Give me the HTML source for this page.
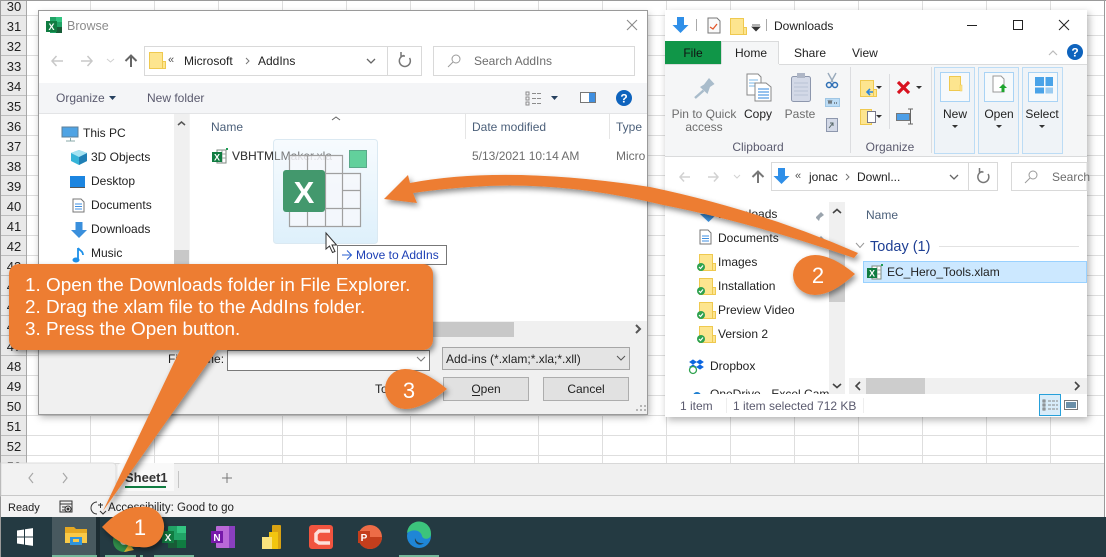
<!DOCTYPE html>
<html><head><meta charset="utf-8"><title>Install add-in</title>
<style>
html,body{margin:0;padding:0;background:#fff;width:1106px;height:557px;overflow:hidden}
svg{display:block}
text{font-family:"Liberation Sans",sans-serif;font-size:12px;fill:#222}
.g{fill:#6d6d6d}.n{fill:#4c607a}.b{fill:#5a5a6e}
.c{text-anchor:middle}
.ca{font-size:18.900px;fill:#fff}
.st{font-size:22px;fill:#fff;text-anchor:middle}
.r{font-size:13px;text-anchor:middle}
</style></head><body>
<svg width="1106" height="557" viewBox="0 0 1106 557" xmlns="http://www.w3.org/2000/svg">
<defs>
<pattern id="grid" x="26" y="15" width="64" height="20" patternUnits="userSpaceOnUse">
<path d="M.5 0V20M0 .5H64" stroke="#dedede" fill="none"/></pattern>
<filter id="sh" x="-5%" y="-5%" width="112%" height="112%"><feDropShadow dx="2" dy="3" stdDeviation="4" flood-color="#000" flood-opacity=".3"/></filter>
<filter id="sh2" x="-20%" y="-20%" width="140%" height="150%"><feDropShadow dx="2" dy="3" stdDeviation="3" flood-color="#000" flood-opacity=".45"/></filter>
<linearGradient id="dr" x1="0" y1="0" x2="0" y2="1"><stop offset="0" stop-color="#f7fbfe"/><stop offset="1" stop-color="#def0fb"/></linearGradient>
<g id="fold"><rect x="0" y="0" width="13" height="16" fill="#fde58f" stroke="#efc94f"/><rect x="13" y="9" width="3" height="7" fill="#fde58f" stroke="#efc94f"/></g>
<g id="syncf"><use href="#fold"/><circle cx="1.500" cy="12.500" r="4" fill="#2fa24f"/><path d="M-.5 12.500l1.500 1.500L3.500 11" stroke="#fff" fill="none" stroke-width="1.200"/></g>
<g id="xl"><rect x="5" y="1" width="9" height="13" fill="#fff" stroke="#7d8a80"/><path d="M9 5H14M9 9H14M10 1V14" stroke="#9aa39c" fill="none"/><rect x="0" y="3" width="10" height="10" fill="#107c41"/><text x="5" y="11.500" class="c" style="font-size:9px;font-weight:bold;fill:#fff">X</text><rect x="14" y="-1" width="2" height="2" fill="#1f9d55"/></g>
</defs>

<!-- Excel background -->
<rect width="1106" height="557" fill="#fff"/>
<rect x="26" y="1" width="1078" height="462" fill="url(#grid)"/>
<rect x="1" y="1" width="25" height="462" fill="#e9e9e9"/>
<path d="M1 15.500H26M1 35.500H26M1 55.500H26M1 75.500H26M1 95.500H26M1 115.500H26M1 135.500H26M1 155.500H26M1 175.500H26M1 195.500H26M1 215.500H26M1 235.500H26M1 255.500H26M1 275.500H26M1 295.500H26M1 315.500H26M1 335.500H26M1 355.500H26M1 375.500H26M1 395.500H26M1 415.500H26M1 435.500H26M1 455.500H26" stroke="#bdbdbd"/>
<path d="M26.500 1V463" stroke="#a8a8a8"/>
<path d="M0 .5H1106M.5 0V557M1104.500 0V517" stroke="#9a9a9a"/>
<text x="14" y="11" class="r">30</text><text x="14" y="31" class="r">31</text><text x="14" y="51" class="r">32</text><text x="14" y="71" class="r">33</text><text x="14" y="91" class="r">34</text><text x="14" y="111" class="r">35</text><text x="14" y="131" class="r">36</text><text x="14" y="151" class="r">37</text><text x="14" y="171" class="r">38</text><text x="14" y="191" class="r">39</text><text x="14" y="211" class="r">40</text><text x="14" y="231" class="r">41</text><text x="14" y="251" class="r">42</text><text x="14" y="271" class="r">43</text><text x="14" y="291" class="r">44</text><text x="14" y="311" class="r">45</text><text x="14" y="331" class="r">46</text><text x="14" y="351" class="r">47</text><text x="14" y="371" class="r">48</text><text x="14" y="391" class="r">49</text><text x="14" y="411" class="r">50</text><text x="14" y="431" class="r">51</text><text x="14" y="451" class="r">52</text><text x="14" y="471" class="r">53</text>
<!-- sheet tabs -->
<rect x="1" y="463" width="1103" height="33" fill="#f0f0f0"/>
<path d="M1 463.500H1104" stroke="#d8d8d8"/>
<path d="M1 463H112q4 0 4 4V496H1z" fill="#f2f2f2" stroke="#dcdcdc"/>
<path d="M118 496V467q0-4 4-4H174V491q0 0-4 0H122q-4 0-4 5z" fill="#f9f9f9"/>
<path d="M33 473l-4 5 4 5M63 473l4 5-4 5" stroke="#a8a8a8" fill="none" stroke-width="1.200"/>
<path d="M178.500 471V488" stroke="#c4c4c4"/>
<path d="M222 478H232M227 473V483" stroke="#777" fill="none"/>
<text x="125" y="482" style="font-size:13px;font-weight:bold;fill:#333">Sheet1</text>
<rect x="125" y="486" width="41" height="2" fill="#107c41"/>
<!-- status bar -->
<rect x="1" y="496" width="1103" height="21" fill="#f3f3f3"/>
<path d="M1 495.500H1104" stroke="#c8c8c8"/>
<text x="8" y="511" style="font-size:11px">Ready</text>
<g fill="none" stroke="#333"><rect x="60" y="501" width="12" height="11"/><path d="M60 504H72M62 507H66M62 510H65"/><circle cx="68" cy="509" r="3" fill="#f3f3f3"/><circle cx="68" cy="509" r="1" fill="#333"/>
<path d="M97 502a6 6 0 1 0 0 12" /><path d="M98 505h5M100.500 503v5M100 511l3 3 3-3"/></g>
<text x="108" y="511" style="font-size:11.500px">Accessibility: Good to go</text>
<!-- taskbar -->
<rect x="1" y="517" width="1105" height="40" fill="#243a42"/>
<path d="M17 530.500l7-1v7h-7zM25 529.300l8-1.200v8.400h-8zM17 537.500h7v7l-7-1zM25 537.500h8v8.400l-8-1.200z" fill="#fff"/>
<rect x="52" y="517" width="45" height="40" fill="#48595f"/>
<rect x="96" y="517" width="4" height="40" fill="#1c2c32"/>
<rect x="52" y="555" width="45" height="2" fill="#76b79a"/>
<rect x="105" y="555" width="31" height="2" fill="#76b79a"/><rect x="140" y="555" width="3" height="2" fill="#76b79a"/><rect x="154" y="555" width="40" height="2" fill="#76b79a"/><rect x="399" y="555" width="40" height="2" fill="#76b79a"/>
<!-- explorer taskbar icon -->
<path d="M65 529h22v14H65z" fill="#f9c947"/><path d="M65 527h9l2 2h11v4H65z" fill="#e5a822"/><rect x="70" y="537" width="12" height="8" fill="#2f94dd"/><rect x="73" y="539" width="6" height="3" fill="#f9c947"/>
<circle cx="124" cy="541" r="11" fill="#2f8d49"/><circle cx="124" cy="541" r="4" fill="#c9d9c9"/><path d="M124 552l5-8 5 6z" fill="#e0b030"/>
<!-- Excel -->
<rect x="168" y="526" width="18" height="22" rx="1" fill="#21a366"/><rect x="177" y="526" width="9" height="7" fill="#33c481"/><rect x="177" y="540" width="9" height="8" fill="#107c41"/><rect x="168" y="540" width="9" height="8" fill="#185c37"/>
<rect x="162" y="531" width="12" height="12" fill="#107c41"/><text x="168" y="541" class="c" style="font-size:10px;font-weight:bold;fill:#fff">X</text>
<!-- OneNote -->
<rect x="216" y="526" width="19" height="22" rx="1" fill="#ba68d8"/><rect x="229" y="526" width="6" height="22" fill="#8a3fbf"/><rect x="211" y="531" width="12" height="12" fill="#7719aa"/><text x="217" y="541" class="c" style="font-size:10px;font-weight:bold;fill:#fff">N</text>
<!-- Power BI -->
<rect x="272" y="525" width="9" height="24" rx="1" fill="#d9a212"/><rect x="269" y="532" width="9" height="17" fill="#f2c50f"/><rect x="262" y="537" width="10" height="12" fill="#f9e27d"/>
<!-- Camtasia -->
<rect x="309" y="525" width="24" height="24" rx="3" fill="#f1543f"/><path d="M330 531h-11l-3 3v7l3 2h11" fill="none" stroke="#fde0da" stroke-width="3.500"/>
<!-- PPT -->
<circle cx="370" cy="537" r="12" fill="#ed6c47"/><path d="M370 537h12a12 12 0 0 1-24 0z" fill="#c43e1c"/><rect x="358" y="531" width="12" height="12" fill="#c43e1c"/><text x="364" y="541" class="c" style="font-size:10px;font-weight:bold;fill:#fff">P</text>
<!-- Edge -->
<circle cx="419" cy="536" r="12" fill="#1f86d6"/><path d="M407 533a12 12 0 0 1 24 1c0 6-8 6-9 2-1-5-8-8-15-3z" fill="#3cc47c"/><path d="M415 538c1 4 5 6 9 5-5 4-10 0-9-5z" fill="#243a42"/>

<!-- BROWSE DIALOG -->
<g filter="url(#sh)"><rect x="38" y="11" width="609" height="403" fill="#fff"/></g>
<rect x="38.500" y="10.500" width="609" height="404" fill="#fff" stroke="#9a9a9a"/>
<rect x="39" y="321" width="608" height="93" fill="#f0f0f0"/>
<rect x="50" y="17" width="12" height="16" fill="#21a366"/><rect x="56" y="17" width="6" height="5" fill="#33c481"/><rect x="56" y="27" width="6" height="6" fill="#185c37"/><rect x="46" y="21" width="11" height="11" fill="#107c41"/><text x="51.500" y="30" class="c" style="font-size:9px;font-weight:bold;fill:#fff">X</text>
<text x="67" y="30" style="fill:#8c8c8c;font-size:12.500px">Browse</text>
<path d="M627 20l10 10M637 20l-10 10" stroke="#8a8a8a" fill="none" stroke-width="1.100"/>
<!-- nav -->
<path d="M63 61H52M56.500 56l-4.500 5 4.500 5M81 61H92M87.500 56l4.500 5-4.500 5" stroke="#c8c8c8" fill="none" stroke-width="1.500"/>
<path d="M107 59l3.500 3 3.500-3" stroke="#cfcfcf" fill="none"/>
<path d="M131 67V56M125.500 61l5.500-5.500 5.500 5.500" stroke="#666" fill="none" stroke-width="2"/>
<rect x="144.500" y="46.500" width="277" height="29" fill="#fff" stroke="#d9d9d9"/>
<path d="M387.500 47V75" stroke="#d9d9d9"/>
<use href="#fold" x="149.500" y="52.500"/>
<text x="168" y="63" style="font-size:11px;fill:#555">«</text>
<text x="184" y="65">Microsoft</text><path d="M246 58l3 3-3 3" stroke="#777" fill="none"/><text x="258" y="65">AddIns</text>
<path d="M367 59l4 4 4-4" stroke="#666" fill="none" stroke-width="1.300"/>
<path d="M409.500 58a5.500 5.500 0 1 1-5.500-2.500M401 52v4h4" stroke="#777" fill="none" stroke-width="1.500"/>
<rect x="433.500" y="46.500" width="201" height="29" fill="#fff" stroke="#d9d9d9"/>
<circle cx="456" cy="59" r="4" fill="none" stroke="#9a9a9a"/><path d="M453 62l-5 5" stroke="#9a9a9a"/>
<text x="474" y="65" class="g">Search AddIns</text>
<!-- toolbar -->
<rect x="39" y="83" width="608" height="30" fill="#f4f5f7"/>
<path d="M39 113.500H647" stroke="#e3e4e6"/>
<text x="56" y="102" class="b">Organize</text><path d="M109 96h7l-3.500 4z" fill="#27415f"/>
<text x="147" y="102" class="b">New folder</text>
<path d="M526 92h3v3h-3zM526 97h3v3h-3zM526 102h3v3h-3z" fill="none" stroke="#8c8c8c"/><path d="M532 93.500H541M532 98.500H541M532 103.500H541" stroke="#8c8c8c" stroke-dasharray="4 1"/>
<path d="M551 96h7l-3.500 4z" fill="#27415f"/>
<rect x="580.500" y="92.500" width="15" height="10" fill="#fff" stroke="#777"/><rect x="589" y="93" width="6" height="9" fill="#3f8fe0"/>
<circle cx="624" cy="98" r="8" fill="#0e63bd"/><text x="624" y="102.500" class="c" style="font-size:12px;font-weight:bold;fill:#fff">?</text>
<!-- nav pane -->
<rect x="174" y="114" width="15" height="207" fill="#f0f0f0"/>
<path d="M178 125l3.500-3 3.500 3" stroke="#555" fill="none" stroke-width="1.500"/>
<rect x="174" y="250" width="15" height="15" fill="#c8c8c8"/>
<path d="M189.500 114V321" stroke="#f4f4f4"/>
<rect x="62" y="127" width="16" height="10" fill="#4fa3e4" stroke="#5d7f99"/><path d="M66 141H75M70.500 138v3" stroke="#8aa" /><text x="83" y="137">This PC</text>
<path d="M79 150l-8 3v8l8 4 8-4v-8z" fill="#36b4d8"/><path d="M79 157l8-4v8l-8 4z" fill="#1f7fb5"/><path d="M71 153l8 4 8-4-8-3z" fill="#a5e3f2"/><text x="91" y="161">3D Objects</text>
<rect x="70" y="176" width="15" height="11" fill="#1c85e0"/><rect x="70" y="187" width="15" height="1" fill="#555"/><text x="91" y="185">Desktop</text>
<path d="M73 199h8l3 3v10H73z" fill="#fff" stroke="#777"/><path d="M75 204h7M75 206.500h7M75 209h7" stroke="#3f8fe0"/><text x="91" y="209">Documents</text>
<path d="M75.500 222h7v8h4.500l-8 8-8-8h4.500z" fill="#3a8fdc"/><text x="91" y="233">Downloads</text>
<path d="M78 248v11M78 248c2 3 5 3 5 7" stroke="#1e90e8" fill="none" stroke-width="1.800"/><ellipse cx="76" cy="260" rx="3.500" ry="2.500" fill="#1e90e8"/><text x="91" y="257">Music</text>
<!-- list -->
<path d="M332 120l4-3 4 3" stroke="#666" fill="none"/>
<text x="211" y="131" class="n">Name</text>
<path d="M465.500 114V139M609.500 114V139" stroke="#e5e5e5"/>
<text x="472" y="131" class="n">Date modified</text><text x="616" y="131" class="n">Type</text>
<use href="#xl" x="212" y="149"/>
<text x="232" y="160">VBHTMLMaker.xla</text>
<text x="472" y="160" class="g">5/13/2021 10:14 AM</text>
<text x="616" y="160" class="g">Micro</text>
<!-- bottom -->
<rect x="190" y="322" width="324" height="15" fill="#c8c8c8"/>
<path d="M636 325l4 4-4 4" stroke="#555" fill="none" stroke-width="2"/>
<rect x="227.500" y="350.500" width="202" height="20" fill="#fff" stroke="#7a7a7a"/>
<path d="M417 357l4 4 4-4" stroke="#777" fill="none"/>
<text x="168" y="363">File name:</text>
<rect x="442.500" y="347.500" width="187" height="22" fill="#e4e4e4" stroke="#a6a6a6"/>
<text x="446" y="363">Add-ins (*.xlam;*.xla;*.xll)</text>
<path d="M617 356l4 4 4-4" stroke="#555" fill="none"/>
<text x="375" y="393">Tools</text>
<rect x="443.500" y="377.500" width="85" height="23" fill="#e1e1e1" stroke="#adadad"/>
<text x="486" y="393" class="c">Open</text><path d="M472 395.500h8" stroke="#222"/>
<rect x="543.500" y="377.500" width="85" height="23" fill="#e1e1e1" stroke="#adadad"/>
<text x="586" y="393" class="c">Cancel</text>
<path d="M644 405h2v2h-2zM640 409h2v2h-2zM644 409h2v2h-2zM636 409h2v2h-2zM640 405h2v2h-2z" fill="#b5b5b5"/>

<!-- drag image -->
<rect x="273.500" y="139.500" width="104" height="104" rx="3" fill="url(#dr)" stroke="#dbe9f2"/>
<text x="232" y="160" style="fill:#444;opacity:.7">VBHTMLMaker.xla</text>
<path d="M289.500 155.500H342.500V173.500H360.500V226.500H289.500zM289.500 208.500H360.500M342.500 190.500H360.500M342.500 173.500V226.500M307.500 155.500V226.500M325.500 155.500V226.500M289.500 173.500H342.500" fill="#f6f8fb" fill-opacity=".8" stroke="#a0a0a0" stroke-width="1.200"/>
<rect x="349.500" y="150.500" width="17" height="17" fill="#62d09c" stroke="#5aa98a"/>
<rect x="283" y="170" width="42" height="42" rx="3" fill="#43986d"/>
<text x="304" y="203" class="c" style="font-size:31px;font-weight:bold;fill:#fff">X</text>
<path d="M326 233v16l3.500-3 3 6.500 2.500-1-3-6.500h4.500z" fill="#fff" stroke="#333"/>
<rect x="337.500" y="245.500" width="109" height="19" fill="#fff" stroke="#777"/>
<path d="M342 255H351M347 250.500l4.500 4.500-4.500 4.500" stroke="#2a5fd0" fill="none"/>
<text x="356" y="259" style="fill:#1c3fb5">Move to AddIns</text>

<!-- EXPLORER -->
<g filter="url(#sh)"><rect x="665" y="10" width="422" height="407" fill="#fff"/></g>
<!-- title -->
<path d="M677.500 17h7v8h4.500l-8 8-8-8h4.500z" fill="#2f8fe8" transform="translate(-.5,0)"/>
<path d="M696.500 19V31" stroke="#aaa"/>
<path d="M708 18h9l3 3v12H708z" fill="#fafafa" stroke="#777"/><path d="M710 27l3 2 4-5" stroke="#e2562a" fill="none" stroke-width="1.300"/>
<use href="#fold" x="730.500" y="18.500"/>
<path d="M752 25h8M752 27h8l-4 4z" fill="#333" stroke="#333" stroke-width=".7"/>
<path d="M766.500 19V31" stroke="#aaa"/>
<text x="774" y="30">Downloads</text>
<path d="M967 25.500H977" stroke="#222"/><rect x="1013.500" y="20.500" width="9" height="9" fill="none" stroke="#222"/><path d="M1059 20l10 10M1069 20l-10 10" stroke="#222" fill="none"/>
<!-- tabs -->
<rect x="665" y="41" width="56" height="23" fill="#109648"/>
<text x="693" y="57" class="c" style="fill:#111">File</text>
<rect x="665" y="64" width="422" height="92" fill="#f5f6f7"/>
<path d="M665 64.500H721M779 64.500H1087" stroke="#dadbdc"/>
<path d="M721.500 64V41.500H778.500V64" fill="#fff" stroke="#dadbdc"/>
<rect x="722" y="42" width="56" height="23" fill="#f5f6f7"/>
<text x="735" y="57">Home</text><text x="794" y="57">Share</text><text x="852" y="57">View</text>
<path d="M1049 55l4-4 4 4" stroke="#bbb" fill="none" stroke-width="1.200"/>
<circle cx="1075" cy="52" r="8" fill="#0e63bd"/><text x="1075" y="56.500" class="c" style="font-size:12px;font-weight:bold;fill:#fff">?</text>
<!-- ribbon -->
<path d="M709 78L714.500 84L710 87L707.500 94L700 87L704 84.500z" fill="#a9bccb"/><path d="M703.500 90.500L695 98" stroke="#a9bccb" stroke-width="2.500"/>
<text x="704" y="118" class="c g">Pin to Quick</text><text x="704" y="131" class="c g">access</text>
<path d="M747 74h11l3 3v18h-14z" fill="#fff" stroke="#888"/><path d="M749 80h9M749 83h9M749 86h9" stroke="#7bb8ea"/>
<path d="M755 83h11l5 4v14h-16z" fill="#fff" stroke="#888"/><path d="M758 89h11M758 92h11M758 95h11M758 98h11" stroke="#2e86dc"/>
<text x="758" y="118" class="c">Copy</text>
<rect x="791.500" y="76.500" width="19" height="25" rx="2" fill="#d3d9e7" stroke="#8d97ad"/><rect x="797" y="73" width="8" height="5" fill="#aeb6c6"/><path d="M794 83h14M794 87h14M794 91h14M794 95h14" stroke="#b9c2d6"/>
<text x="800" y="118" class="c g">Paste</text>
<path d="M828 73l5 9M836 73l-5 9" stroke="#9ab" fill="none" stroke-width="1.400"/><circle cx="829" cy="85" r="2.500" fill="none" stroke="#2e6fb5" stroke-width="1.500"/><circle cx="835" cy="85" r="2.500" fill="none" stroke="#2e6fb5" stroke-width="1.500"/>
<rect x="825.500" y="98.500" width="14" height="8" fill="#bcdcf5" stroke="#9fc6e4"/><path d="M828 100l1 4 1-4 1 4 1-4" stroke="#555" fill="none" stroke-width=".7"/><path d="M834 103h3" stroke="#333" stroke-dasharray="1 1"/>
<rect x="826.500" y="118.500" width="11" height="13" fill="#d3d9e7" stroke="#8d97ad"/><path d="M829 128l4-5M830 123h3v3" stroke="#566" fill="none"/>
<text x="758" y="151" class="c b">Clipboard</text>
<path d="M850.500 67V153M931.500 67V153M889.500 74V129" stroke="#dcdde0"/>
<use href="#fold" x="860.500" y="80.500"/><path d="M873 92h-6M870 89l-3 3 3 3" stroke="#2e86dc" fill="none" stroke-width="1.600"/><path d="M876 86h6l-3 3z" fill="#333"/>
<rect x="860.500" y="109.500" width="11" height="15" fill="#fde58f" stroke="#efc94f"/><rect x="867.500" y="111.500" width="8" height="11" fill="#fff" stroke="#778"/><path d="M876 115h6l-3 3z" fill="#333"/>
<path d="M898 82l11 11M909 82l-11 11" stroke="#d8121f" stroke-width="3.200" fill="none"/><path d="M916 86h6l-3 3z" fill="#333"/>
<rect x="896.500" y="113.500" width="13" height="7" fill="#4d9fe8" stroke="#777"/><path d="M908 109h5M908 124h5M910.500 109v15" stroke="#666" fill="none"/>
<text x="890" y="151" class="c b">Organize</text>
<g fill="#eff3f7" stroke="#bcdcf5"><rect x="934.500" y="67.500" width="40" height="86"/><rect x="978.500" y="67.500" width="40" height="86"/><rect x="1022.500" y="67.500" width="40" height="86"/></g>
<g fill="#f6f9fb" stroke="#a9d3f5"><rect x="940.500" y="72.500" width="29" height="29"/><rect x="984.500" y="72.500" width="29" height="29"/><rect x="1028.500" y="72.500" width="29" height="29"/></g>
<rect x="949.500" y="76.500" width="11" height="14" fill="#fde58f" stroke="#efc94f"/><rect x="960" y="85" width="2" height="6" fill="#fde58f" stroke="#efc94f" stroke-width=".5"/>
<path d="M993 76h8l3 3v13h-11z" fill="#fff" stroke="#999"/><path d="M1003 84l-4 4h2.500v4h3v-4h2.500z" fill="#1ea52e"/>
<path d="M1035 77h9v9h-9zM1045.500 77h7.500v9h-7.500zM1035 87.500h9v6h-9zM1045.500 87.500h7.500v6h-7.500z" fill="#4aa3e8"/><path d="M1045.500 87.500h7.500v6h-7.500z" fill="#9bcbf0"/>
<text x="955" y="118" class="c">New</text><text x="999" y="118" class="c">Open</text><text x="1042" y="118" class="c">Select</text>
<path d="M952 125h6l-3 3zM996 125h6l-3 3zM1039 125h6l-3 3z" fill="#333"/>
<path d="M665 156.500H1087" stroke="#dadbdc"/>
<!-- address -->
<path d="M690 177H680M684 172.500L680 177l4 4.500M708 177h10M714 172.500l4 4.500-4 4.500" stroke="#d2d2d2" fill="none" stroke-width="1.500"/>
<path d="M734 175l3 3 3-3" stroke="#d2d2d2" fill="none"/>
<path d="M758 183V172M752.500 177l5.500-5.500 5.500 5.500" stroke="#777" fill="none" stroke-width="2"/>
<rect x="771.500" y="162.500" width="226" height="28" fill="#fff" stroke="#d9d9d9"/><path d="M968.500 163V190" stroke="#d9d9d9"/>
<path d="M778 168h7v8h4.500l-8 8-8-8h4.500z" fill="#2f8fe8"/>
<text x="795" y="179" style="font-size:11px;fill:#555">«</text>
<text x="809" y="181">jonac</text><path d="M846 174l3 3-3 3" stroke="#777" fill="none"/><text x="857" y="181">Downl...</text>
<path d="M950 175l4 4 4-4" stroke="#666" fill="none" stroke-width="1.300"/>
<path d="M988 174a5.500 5.500 0 1 1-5.500-2.500M979.500 168v4h4" stroke="#777" fill="none" stroke-width="1.500"/>
<rect x="1011.500" y="162.500" width="75.500" height="28" fill="#fff" stroke="#d9d9d9"/>
<circle cx="1033" cy="175" r="4" fill="none" stroke="#9a9a9a"/><path d="M1030 178l-5 5" stroke="#9a9a9a"/>
<text x="1052" y="181" class="g">Search</text>
<!-- nav pane -->
<path d="M705 208h7v6h5l-8.500 8-8.500-8h5z" fill="#3a8fdc"/><text x="718" y="218">Downloads</text>
<path d="M816 217l5-5 3 3-4 3-1 3-3-3z" fill="#9aa4ad"/>
<path d="M700 230h8l3 3v11h-11z" fill="#fff" stroke="#777"/><path d="M702 236h7M702 238.500h7M702 241h7" stroke="#3f8fe0"/><text x="718" y="242">Documents</text>
<path d="M816 241l5-5 3 3-4 3-1 3-3-3z" fill="#9aa4ad"/>
<use href="#syncf" x="699.500" y="254.500"/><text x="718" y="266">Images</text>
<use href="#syncf" x="699.500" y="278.500"/><text x="718" y="290">Installation</text>
<use href="#syncf" x="699.500" y="302.500"/><text x="718" y="314">Preview Video</text>
<use href="#syncf" x="699.500" y="326.500"/><text x="718" y="338">Version 2</text>
<path d="M693 360l3 2-3 2-3-2zM700 360l3 2-3 2-3-2zM693 365l3 2-3 2-3-2zM700 365l3 2-3 2-3-2z" fill="#0d66e0" stroke="#0d66e0"/><circle cx="693" cy="370" r="3.500" fill="#fff" stroke="#2fa24f" stroke-width="1.300"/>
<text x="710" y="370">Dropbox</text>
<circle cx="697" cy="396" r="4" fill="#1f7fd0"/><text x="710" y="398">OneDrive - Excel Cam</text>
<rect x="665" y="394" width="422" height="23" fill="#fff"/>
<rect x="829" y="202" width="16" height="192" fill="#f0f0f0"/>
<rect x="829" y="250" width="16" height="52" fill="#cdcdcd"/>
<path d="M833 213l4-3.500 4 3.500M833 384l4 3.500 4-3.500" stroke="#444" fill="none" stroke-width="1.600"/>
<text x="866" y="219" class="n">Name</text>
<path d="M856 243l4 4.500 4-4.500" stroke="#999" fill="none"/>
<text x="870" y="251" style="font-size:14.500px;fill:#1e3f94">Today (1)</text>
<path d="M939 246.500H1079" stroke="#e2e2e2"/>
<rect x="863.500" y="261.500" width="223" height="21" fill="#cce8ff" stroke="#99d1ff"/>
<use href="#xl" x="867" y="265"/>
<text x="887" y="276">EC_Hero_Tools.xlam</text>
<rect x="849" y="378" width="238" height="16" fill="#f0f0f0"/>
<rect x="866" y="378" width="59" height="16" fill="#cdcdcd"/>
<path d="M860 382l-4 4 4 4M1075 382l4 4-4 4" stroke="#444" fill="none" stroke-width="1.600"/>
<text x="680" y="410" class="b">1 item</text><path d="M726.500 398V413M863.500 398V413" stroke="#eee"/>
<text x="733" y="410" class="b">1 item selected  712 KB</text>
<rect x="1039.500" y="394.500" width="21" height="21" fill="#d8ecf9" stroke="#26a0da"/>
<path d="M1043 400h2v2h-2zM1043 404h2v2h-2zM1043 408h2v2h-2z" fill="none" stroke="#777"/><path d="M1048 401H1058M1048 405H1058M1048 409H1058" stroke="#888" stroke-dasharray="3 1"/>
<rect x="1064.500" y="400.500" width="13" height="9" fill="#fff" stroke="#777"/><rect x="1066" y="402" width="10" height="6" fill="#6b8fa8"/>

<!-- ORANGE ANNOTATIONS -->
<g filter="url(#sh2)">
<path d="M384 199L408 175L410 183Q505 165 650 187Q760 210 858 253L854 258Q750 222 663 205Q560 180 470 187Q440 189 413 193L417 203Z" fill="#ed7d31"/>
</g>
<g filter="url(#sh2)">
<path d="M19 264H423a10 10 0 0 1 10 10V340a10 10 0 0 1-10 10H217L103 511L180 350H19a10 10 0 0 1-10-10V274a10 10 0 0 1 10-10z" fill="#ed7d31"/>
</g>
<text x="25" y="291" class="ca">1. Open the Downloads folder in File Explorer.</text>
<text x="25" y="313" class="ca">2. Drag the xlam file to the AddIns folder.</text>
<text x="25" y="335" class="ca">3. Press the Open button.</text>
<g filter="url(#sh2)"><path d="M102 527Q122 506 140 507a20 20 0 0 1 24 21 20 20 0 0 1-24 19Q122 548 102 527z" fill="#ed7d31"/></g>
<text x="140" y="535" class="st">1</text>
<g filter="url(#sh2)"><path d="M855 274Q832 255 815 255a22 20 0 0 0 0 40Q832 295 855 274z" fill="#ed7d31"/></g>
<text x="818" y="283" class="st">2</text>
<g filter="url(#sh2)"><path d="M447 389Q423 369 405 369a20 20 0 0 0-20 20 20 20 0 0 0 20 20Q423 409 447 389z" fill="#ed7d31"/></g>
<text x="409" y="398" class="st">3</text>
</svg>
</body></html>
